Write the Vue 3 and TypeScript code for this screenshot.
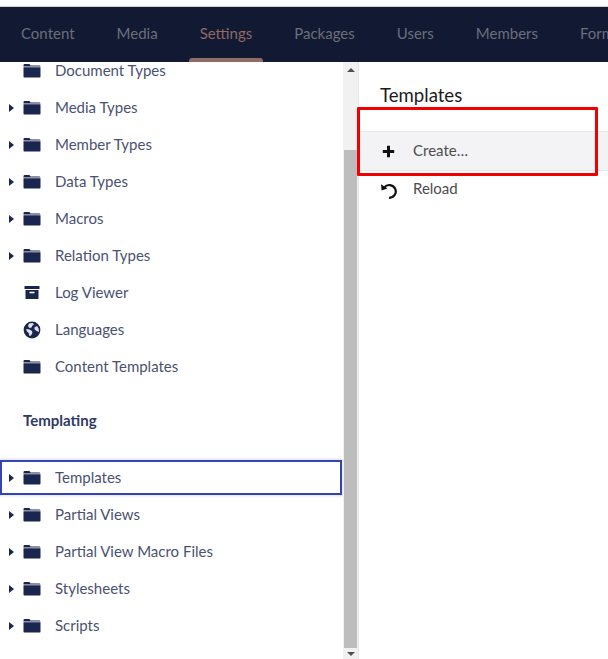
<script setup lang="ts">
const tabs = ['Content', 'Media', 'Settings', 'Packages', 'Users', 'Members', 'Forms']
type Row = { label: string; icon: 'folder' | 'box' | 'globe'; caret: boolean; focus?: boolean }
const upper: Row[] = [
  { label: 'Document Types', icon: 'folder', caret: false },
  { label: 'Media Types', icon: 'folder', caret: true },
  { label: 'Member Types', icon: 'folder', caret: true },
  { label: 'Data Types', icon: 'folder', caret: true },
  { label: 'Macros', icon: 'folder', caret: true },
  { label: 'Relation Types', icon: 'folder', caret: true },
  { label: 'Log Viewer', icon: 'box', caret: false },
  { label: 'Languages', icon: 'globe', caret: false },
  { label: 'Content Templates', icon: 'folder', caret: false },
]
const lower: Row[] = [
  { label: 'Templates', icon: 'folder', caret: true, focus: true },
  { label: 'Partial Views', icon: 'folder', caret: true },
  { label: 'Partial View Macro Files', icon: 'folder', caret: true },
  { label: 'Stylesheets', icon: 'folder', caret: true },
  { label: 'Scripts', icon: 'folder', caret: true },
]
const groups = [
  { title: '', rows: upper },
  { title: 'Templating', rows: lower },
]
</script>

<template>
  <div class="page">
    <div class="chrome"></div>
    <nav class="nav">
      <a v-for="t in tabs" :key="t" class="tab" :class="{ active: t === 'Settings' }">{{ t }}</a>
    </nav>
    <div class="main">
      <aside class="tree">
        <div class="tree-inner">
          <template v-for="g in groups" :key="g.title">
            <h4 v-if="g.title" class="group">{{ g.title }}</h4>
            <div v-for="r in g.rows" :key="r.label" class="row" :class="{ focus: r.focus }">
              <span class="caret" :class="{ hidden: !r.caret }"></span>
              <svg v-if="r.icon === 'folder'" class="ico" viewBox="0 0 18 15">
                <path d="M0.5 2.2Q0.5 1 1.7 1H6.4L7.6 2.4H16.2Q17.5 2.4 17.5 3.4H0.5ZM0.5 4.2H17.5V13.4Q17.5 14.6 16.2 14.6H1.8Q0.5 14.6 0.5 13.4Z" fill="#1b264f" />
              </svg>
              <svg v-else-if="r.icon === 'box'" class="ico" viewBox="0 0 18 15">
                <path d="M1.5 1H16.5V4H1.5ZM2.5 5H15.5V14H2.5Z" fill="#1b264f" />
                <rect x="6.5" y="6.7" width="5" height="1.6" fill="#fff" />
              </svg>
              <svg v-else class="ico globe" viewBox="0 0 18 18">
                <circle cx="9" cy="9" r="8.4" fill="#1b264f" />
                <path d="M6 2.6 9.6 2 11 3.4 9.2 4.8 8.6 6.6 6.4 7 5 5ZM3.2 8 6.6 8.6 9 10 9.4 12 8 14.6 6.4 15 5.8 12 3.8 10.4ZM11.6 6.2 14 5 15.6 7.6 16 11 13.6 10 11.4 8.2Z" fill="#dfe1e8" />
              </svg>
              <span class="label">{{ r.label }}</span>
            </div>
          </template>
        </div>
      </aside>
      <div class="scrollbar">
        <span class="arrow up"></span>
        <div class="track"><div class="thumb"></div></div>
        <span class="arrow down"></span>
      </div>
      <section class="panel">
        <h3 class="title">Templates</h3>
        <div class="action hovered">
          <svg class="act-ico" viewBox="0 0 17 17"><path d="M7 2.8H10V7H14.2V10H10V14.2H7V10H2.8V7H7Z" fill="#111" /></svg>
          <span>Create…</span>
        </div>
        <div class="action">
          <svg class="act-ico" viewBox="0 0 17 17">
            <path d="M4.2 5.6A6.4 6.4 0 1 1 9 15.8" fill="none" stroke="#111" stroke-width="2.2" />
            <path d="M1 2.2 1.6 8.4 7.4 6.6Z" fill="#111" />
          </svg>
          <span>Reload</span>
        </div>
      </section>
    </div>
    <div class="callout"></div>
  </div>
</template>

<style>
html, body { margin: 0; background: #fff; }
</style>

<style scoped>
.page {
  position: relative;
  width: 608px;
  height: 659px;
  overflow: hidden;
  display: flex;
  flex-direction: column;
  font-family: Lato, "Open Sans", sans-serif;
  background: #fff;
}
.chrome {
  height: 6px;
  flex: none;
  background: #fbfbfb;
  border-bottom: 1px solid #d0d0d0;
}
.nav {
  height: 55px;
  flex: none;
  display: flex;
  background: #121933;
  position: relative;
  z-index: 1;
  overflow: hidden;
}
.tab {
  position: relative;
  padding: 0 21px;
  line-height: 53px;
  font-size: 15px;
  color: #6c6f7a;
  white-space: nowrap;
}
.tab.active { color: #8f6a62; padding: 0 11px; margin: 0 10px; }
.tab.active::after {
  content: "";
  position: absolute;
  left: 0;
  right: 0;
  bottom: 0;
  height: 4px;
  border-radius: 3px 3px 0 0;
  background: #8f6c65;
}
.main {
  flex: 1;
  min-height: 0;
  display: flex;
}
.tree {
  width: 343px;
  flex: none;
  overflow: hidden;
}
.tree-inner { margin-top: -11px; }
.row {
  height: 37px;
  box-sizing: border-box;
  display: flex;
  align-items: center;
  color: #4a5272;
  font-size: 15px;
  position: relative;
}
.row.focus {
  height: 35px;
  margin: 2px 0 0;
  border: 2px solid #3544b1;
  box-shadow: 0 0 2px 1px rgba(53, 68, 177, 0.18);
  width: 342px;
}
.caret {
  flex: none;
  width: 0;
  height: 0;
  margin: 2px 0 0 9px;
  border-left: 5px solid #1b264f;
  border-top: 4px solid transparent;
  border-bottom: 4px solid transparent;
}
.row.focus .caret { margin: 0 0 0 7px; }
.row.focus .ico { margin-top: 0; }
.row.focus .label { padding-bottom: 2px; }
.caret.hidden { visibility: hidden; }
.ico {
  flex: none;
  width: 18px;
  height: 15px;
  margin: 2px 0 0 9px;
}
.ico.globe { height: 18px; }
.label { margin-left: 14px; white-space: nowrap; }
.group {
  margin: 0;
  height: 74px;
  padding-left: 23px;
  line-height: 73px;
  font-size: 15px;
  font-weight: 700;
  color: #2f3a63;
}
.scrollbar {
  width: 15px;
  flex: none;
  display: flex;
  flex-direction: column;
  align-items: center;
  background: #f1f1f1;
  border-right: 1px solid #e6e6e6;
}
.arrow {
  flex: none;
  width: 0;
  height: 0;
  border-left: 4px solid transparent;
  border-right: 4px solid transparent;
}
.arrow.up { margin-top: 6px; border-bottom: 4px solid #505050; }
.arrow.down { margin: 4px 0 3px; border-top: 4px solid #505050; }
.track {
  flex: 1;
  width: 100%;
  display: flex;
  flex-direction: column;
  justify-content: flex-end;
}
.thumb { height: 498px; margin: 0 1px; background: #bdbdbd; }
.panel { flex: 1; min-width: 0; }
.title {
  margin: 0;
  padding: 21px 0 0 21px;
  height: 48px;
  font-size: 18.6px;
  line-height: 24px;
  font-weight: 400;
  color: #1b1b1b;
}
.action {
  height: 38px;
  display: flex;
  align-items: center;
  padding-left: 21px;
  font-size: 15px;
  color: #4d4d4f;
}
.action span { padding-bottom: 4px; }
.action.hovered span { padding-bottom: 2px; }
.action.hovered {
  height: 40px;
  box-sizing: border-box;
  background: #f3f3f5;
  border-top: 1px solid #e9e9eb;
  border-bottom: 1px solid #e9e9eb;
}
.act-ico { width: 17px; height: 17px; flex: none; margin-right: 16px; }
.callout {
  position: absolute;
  left: 357px;
  top: 107px;
  width: 241px;
  height: 69px;
  box-sizing: border-box;
  border: 3px solid #f00000;
  border-radius: 1px;
}
</style>
